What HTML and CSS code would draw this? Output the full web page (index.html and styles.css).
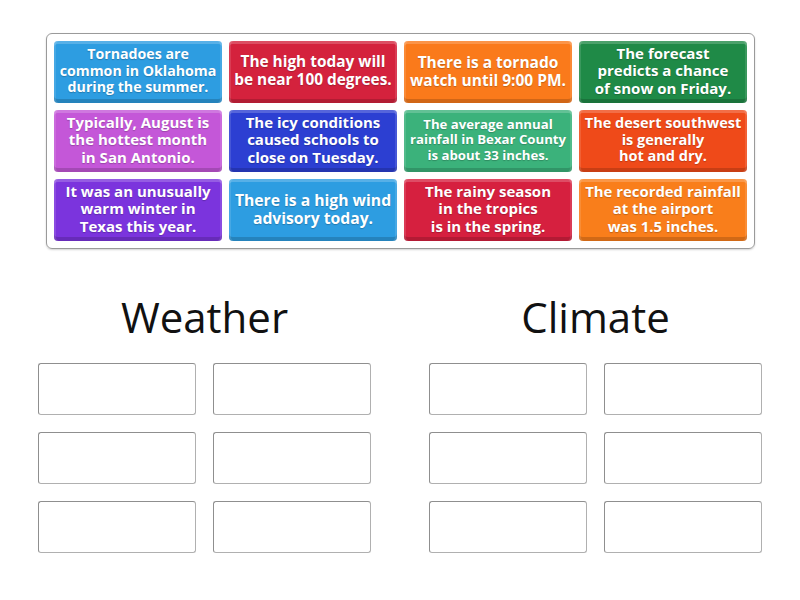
FILE: index.html
```html
<!DOCTYPE html>
<html>
<head>
<meta charset="utf-8">
<link rel="stylesheet" href="styles.css">
</head>
<body>
<div class="pool">
  <div class="card c-sky fs-142">Tornadoes are<br>common in Oklahoma<br>during the summer.</div>
  <div class="card c-red fs-154">The high today will<br>be near 100 degrees.</div>
  <div class="card c-orange fs-155">There is a tornado<br>watch until 9:00 PM.</div>
  <div class="card c-green fs-150">The forecast<br>predicts a chance<br>of snow on Friday.</div>
  <div class="card c-orchid fs-150">Typically, August is<br>the hottest month<br>in San Antonio.</div>
  <div class="card c-blue fs-150">The icy conditions<br>caused schools to<br>close on Tuesday.</div>
  <div class="card c-teal fs-132">The average annual<br>rainfall in Bexar County<br>is about 33 inches.</div>
  <div class="card c-vermilion fs-145">The desert southwest<br>is generally<br>hot and dry.</div>
  <div class="card c-purple fs-150">It was an unusually<br>warm winter in<br>Texas this year.</div>
  <div class="card c-sky fs-157">There is a high wind<br>advisory today.</div>
  <div class="card c-crimson fs-150">The rainy season<br>in the tropics<br>is in the spring.</div>
  <div class="card c-orange2 fs-149">The recorded rainfall<br>at the airport<br>was 1.5 inches.</div>
</div>
<div class="groups">
  <div class="group">
    <h2 class="title">Weather</h2>
    <div class="slots">
      <div class="slot"></div><div class="slot"></div>
      <div class="slot"></div><div class="slot"></div>
      <div class="slot"></div><div class="slot"></div>
    </div>
  </div>
  <div class="group">
    <h2 class="title">Climate</h2>
    <div class="slots">
      <div class="slot"></div><div class="slot"></div>
      <div class="slot"></div><div class="slot"></div>
      <div class="slot"></div><div class="slot"></div>
    </div>
  </div>
</div>
</body>
</html>
```
FILE: styles.css
```css
html, body {
  margin: 0;
  padding: 0;
  background: #ffffff;
  font-family: "Open Sans", "Liberation Sans", sans-serif;
}

.pool {
  box-sizing: border-box;
  width: 709px;
  margin: 33px 0 0 46px;
  padding: 7px;
  border: 1px solid #9a9a9a;
  border-radius: 6px;
  box-shadow: 0 1px 2px rgba(0, 0, 0, 0.18);
  display: grid;
  grid-template-columns: repeat(4, 168px);
  grid-auto-rows: 62px;
  gap: 7px;
}

.card {
  border-radius: 4px;
  color: #ffffff;
  font-weight: 700;
  font-size: 15px;
  line-height: 1.17;
  text-align: center;
  white-space: nowrap;
  display: flex;
  align-items: center;
  justify-content: center;
  padding-bottom: 2px;
  box-sizing: border-box;
  text-shadow: 0 1px 1px rgba(0, 0, 0, 0.22);
  box-shadow:
    inset 0 3px 0 rgba(255, 255, 255, 0.2),
    inset 2px 0 0 rgba(255, 255, 255, 0.12),
    inset -2px 0 0 rgba(255, 255, 255, 0.12),
    inset 0 -4px 0 rgba(0, 0, 0, 0.16);
}

/* auto-fitted text sizes */
.fs-132 { font-size: 13.2px; }
.fs-142 { font-size: 14.2px; }
.fs-145 { font-size: 14.5px; }
.fs-149 { font-size: 14.9px; }
.fs-150 { font-size: 15px; }
.fs-154 { font-size: 15.4px; }
.fs-155 { font-size: 15.5px; }
.fs-157 { font-size: 15.7px; }

.c-sky { background: #2d9de1; }
.c-red { background: #d4223d; }
.c-orange { background: #fa7a1b; }
.c-green { background: #1f8a47; }
.c-orchid { background: #c457d8; }
.c-blue { background: #2c3fd2; }
.c-teal { background: #3bb27b; }
.c-vermilion { background: #ef4a19; }
.c-purple { background: #7b34dd; }
.c-crimson { background: #d6203f; }
.c-orange2 { background: #f97e1b; }

.groups {
  display: flex;
  gap: 58px;
  padding-left: 38px;
  margin-top: 39px;
}

.group {
  width: 333px;
}

.title {
  margin: 0 0 17px;
  font-weight: 400;
  font-size: 42px;
  line-height: 58px;
  text-align: center;
  color: #111111;
}

.slots {
  display: grid;
  grid-template-columns: 158px 158px;
  grid-auto-rows: 52px;
  column-gap: 17px;
  row-gap: 17px;
}

.slot {
  box-sizing: border-box;
  border: 1px solid #8f8f8f;
  border-right-color: #b0b0b0;
  border-bottom-color: #b0b0b0;
  border-radius: 3px;
  background: #ffffff;
}
```
